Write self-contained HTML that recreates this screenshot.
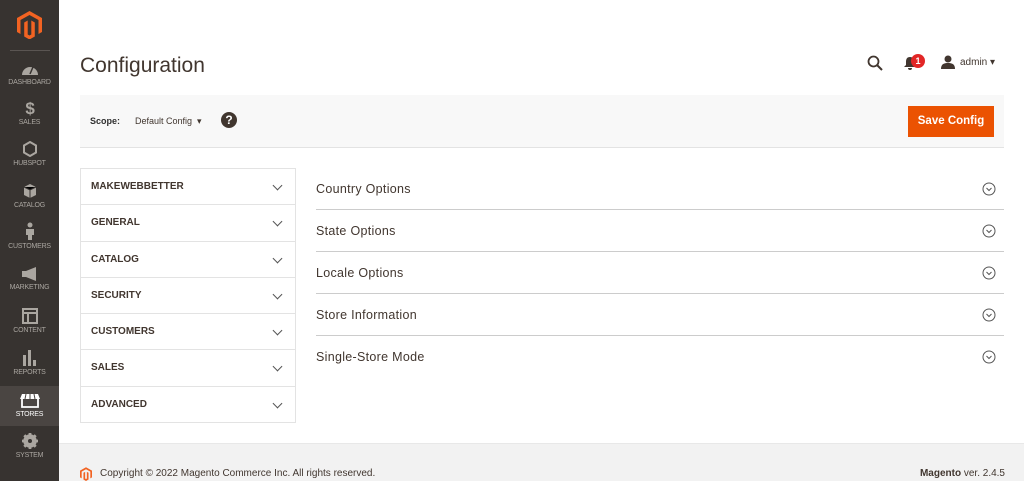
<!DOCTYPE html>
<html><head><meta charset="utf-8"><style>
*{box-sizing:border-box;margin:0;padding:0}
body{width:1024px;height:481px;overflow:hidden;font-family:"Liberation Sans",sans-serif;background:#fff;position:relative;color:#303030}
.sb{position:absolute;left:0;top:0;width:59px;height:481px;background:#373330}
.logo{position:absolute;left:17px;top:11px}
.sep{position:absolute;left:10px;top:50px;width:40px;height:1px;background:#5a5552}
.it{position:absolute;left:0;width:59px;text-align:center;color:#aaa6a0;font-size:7px;letter-spacing:-.2px}
.it svg{display:block;margin:0 auto 3px}
.act{background:#4a4542;color:#fff}
.pt{position:absolute;left:80px;top:54px;font-size:21px;color:#41362f}
.bar{position:absolute;left:80px;top:95px;width:924px;height:53px;background:#f8f8f8;border-bottom:1px solid #e3e3e3}
.btn{position:absolute;left:908px;top:106px;width:86px;height:31px;background:#eb5202;color:#fff;font-weight:bold;font-size:11.5px;text-align:center;line-height:31px}
.lp{position:absolute;left:80px;top:168px;width:216px;height:255px;border:1px solid #e3e3e3}
.lp div{height:36.3px;border-bottom:1px solid #e3e3e3;font-size:10px;font-weight:bold;padding-left:10px;line-height:36px;color:#41362f;position:relative}
.lp div:last-child{border-bottom:0}
.chev{position:absolute;right:14px;top:13px;width:7px;height:7px;border-right:1.3px solid #555;border-bottom:1.3px solid #555;transform:rotate(45deg)}
.rs{position:absolute;left:316px;width:688px;height:42px;border-bottom:1px solid #ccc;font-size:12.5px;color:#41362f;line-height:42px;letter-spacing:.3px}
.rs svg{position:absolute;right:8px;top:14px}
.ft{position:absolute;left:59px;top:443px;width:965px;height:38px;background:#f2f2f2;border-top:1px solid #e8e8e8;font-size:10px;color:#41362f}
</style></head><body>
<div class="sb">
<svg class="logo" width="25" height="28" viewBox="0 0 25 28"><path d="M12.5 0L0 7v14l3.5 2V9l9-5 9 5v14l3.5-2V7z M10.7 9.5l-3.5 2v14l5.3 3 5.3-3v-14l-3.5-2v14l-1.8 1-1.8-1z" fill="#f26322"/></svg>
<div class="sep"></div>
<div class="it" style="top:62px"><svg width="18" height="14" viewBox="0 0 18 14"><path d="M1 13A8 8 0 0 1 17 13z" fill="#aaa6a0"/><path d="M9 12l3-7" stroke="#373330" stroke-width="1.5"/></svg>DASHBOARD</div>
<div class="it" style="top:99px"><svg width="12" height="17" viewBox="0 0 12 17"><text x="6" y="15" text-anchor="middle" font-size="17" font-weight="bold" fill="#aaa6a0" font-family="Liberation Sans">$</text></svg>SALES</div>
<div class="it" style="top:141px"><svg width="14" height="16" viewBox="0 0 14 16"><path d="M7 1l6 3.5v7L7 15l-6-3.5v-7z" stroke="#aaa6a0" stroke-width="2" fill="none"/></svg>HUBSPOT</div>
<div class="it" style="top:183px"><svg width="14" height="16" viewBox="0 0 14 16"><path d="M7 1l6 3v8l-6 3-6-3V4z" fill="#aaa6a0"/><path d="M1 4l6 3 6-3M7 7v8" stroke="#373330" stroke-width="1"/></svg>CATALOG</div>
<div class="it" style="top:222px"><svg width="10" height="18" viewBox="0 0 10 18"><circle cx="5" cy="3" r="2.5" fill="#aaa6a0"/><path d="M1 7h8v6H7v5H3v-5H1z" fill="#aaa6a0"/></svg>CUSTOMERS</div>
<div class="it" style="top:267px"><svg width="18" height="14" viewBox="0 0 18 14"><path d="M1 4h4l10-4v14L5 10H1z" fill="#aaa6a0"/></svg>MARKETING</div>
<div class="it" style="top:308px"><svg width="16" height="16" viewBox="0 0 16 16"><rect x="1" y="1" width="14" height="14" fill="none" stroke="#aaa6a0" stroke-width="2"/><path d="M1 5h14M6 5v10" stroke="#aaa6a0" stroke-width="2"/></svg>CONTENT</div>
<div class="it" style="top:350px"><svg width="16" height="16" viewBox="0 0 16 16"><rect x="1" y="5" width="3" height="11" fill="#aaa6a0"/><rect x="6" y="0" width="3" height="16" fill="#aaa6a0"/><rect x="11" y="10" width="3" height="6" fill="#aaa6a0"/></svg>REPORTS</div>
<div class="it act" style="top:386px;height:40px;padding-top:7px"><svg width="20" height="15" viewBox="0 0 20 15"><path d="M2 1h16l2 5H0z" fill="#fff"/><path d="M2 6v8h16V6" stroke="#fff" stroke-width="1.8" fill="none"/><path d="M6 1l-1 5M10 1v5M14 1l1 5" stroke="#4a4542"/></svg>STORES</div>
<div class="it" style="top:433px"><svg width="16" height="16" viewBox="0 0 16 16"><circle cx="8" cy="8" r="5" fill="none" stroke="#aaa6a0" stroke-width="3.5"/><path d="M8 0v16M0 8h16M2.3 2.3l11.4 11.4M13.7 2.3L2.3 13.7" stroke="#aaa6a0" stroke-width="2.8"/><circle cx="8" cy="8" r="2" fill="#373330"/></svg>SYSTEM</div>
</div>
<div class="pt">Configuration</div>
<svg style="position:absolute;left:867px;top:55px" width="16" height="16" viewBox="0 0 16 16"><circle cx="6.5" cy="6.5" r="5" stroke="#41362f" stroke-width="1.8" fill="none"/><path d="M10 10l5 5" stroke="#41362f" stroke-width="2"/></svg>
<svg style="position:absolute;left:904px;top:57px" width="12" height="13" viewBox="0 0 12 13"><path d="M6 0C3 0 2 2 2 5v3L0 10h12l-2-2V5C10 2 9 0 6 0zM4 11h4a2 2 0 0 1-4 0z" fill="#41362f"/></svg>
<div style="position:absolute;left:911px;top:54px;width:14px;height:14px;border-radius:50%;background:#e22626;color:#fff;font-size:9px;font-weight:bold;text-align:center;line-height:14px">1</div>
<svg style="position:absolute;left:941px;top:55px" width="14" height="14" viewBox="0 0 14 14"><circle cx="7" cy="4" r="3.5" fill="#41362f"/><path d="M0 14c0-5 3-6 7-6s7 1 7 6z" fill="#41362f"/></svg>
<div style="position:absolute;left:960px;top:57px;font-size:10px;color:#41362f">admin &#9662;</div>
<div class="bar">
<span style="position:absolute;left:10px;top:21px;font-size:9px;font-weight:bold">Scope:</span>
<span style="position:absolute;left:55px;top:21px;font-size:9px;color:#41362f">Default Config &nbsp;&#9662;</span>
<span style="position:absolute;left:141px;top:17px;width:16px;height:16px;border-radius:50%;background:#41362f;color:#fff;font-size:12px;font-weight:bold;text-align:center;line-height:16px">?</span>
</div>
<div class="btn">Save Config</div>
<div class="lp">
<div>MAKEWEBBETTER<span class="chev"></span></div>
<div>GENERAL<span class="chev"></span></div>
<div>CATALOG<span class="chev"></span></div>
<div>SECURITY<span class="chev"></span></div>
<div>CUSTOMERS<span class="chev"></span></div>
<div>SALES<span class="chev"></span></div>
<div>ADVANCED<span class="chev"></span></div>
</div>
<div class="rs" style="top:168px">Country Options<svg width="14" height="14"><circle cx="7" cy="7" r="6" stroke="#555" fill="none"/><path d="M4.5 6l2.5 2.5L9.5 6" stroke="#555" fill="none"/></svg></div>
<div class="rs" style="top:210px">State Options<svg width="14" height="14"><circle cx="7" cy="7" r="6" stroke="#555" fill="none"/><path d="M4.5 6l2.5 2.5L9.5 6" stroke="#555" fill="none"/></svg></div>
<div class="rs" style="top:252px">Locale Options<svg width="14" height="14"><circle cx="7" cy="7" r="6" stroke="#555" fill="none"/><path d="M4.5 6l2.5 2.5L9.5 6" stroke="#555" fill="none"/></svg></div>
<div class="rs" style="top:294px">Store Information<svg width="14" height="14"><circle cx="7" cy="7" r="6" stroke="#555" fill="none"/><path d="M4.5 6l2.5 2.5L9.5 6" stroke="#555" fill="none"/></svg></div>
<div class="rs" style="top:336px;border-bottom:0">Single-Store Mode<svg width="14" height="14"><circle cx="7" cy="7" r="6" stroke="#555" fill="none"/><path d="M4.5 6l2.5 2.5L9.5 6" stroke="#555" fill="none"/></svg></div>
<div class="ft">
<svg style="position:absolute;left:21px;top:23px" width="12" height="14" viewBox="0 0 25 28"><path d="M12.5 0L0 7v14l3.5 2V9l9-5 9 5v14l3.5-2V7z M10.7 9.5l-3.5 2v14l5.3 3 5.3-3v-14l-3.5-2v14l-1.8 1-1.8-1z" fill="#f26322"/></svg>
<span style="position:absolute;left:41px;top:24px">Copyright © 2022 Magento Commerce Inc. All rights reserved.</span>
<span style="position:absolute;right:19px;top:24px"><b>Magento</b> ver. 2.4.5</span>
</div>
</body></html>
